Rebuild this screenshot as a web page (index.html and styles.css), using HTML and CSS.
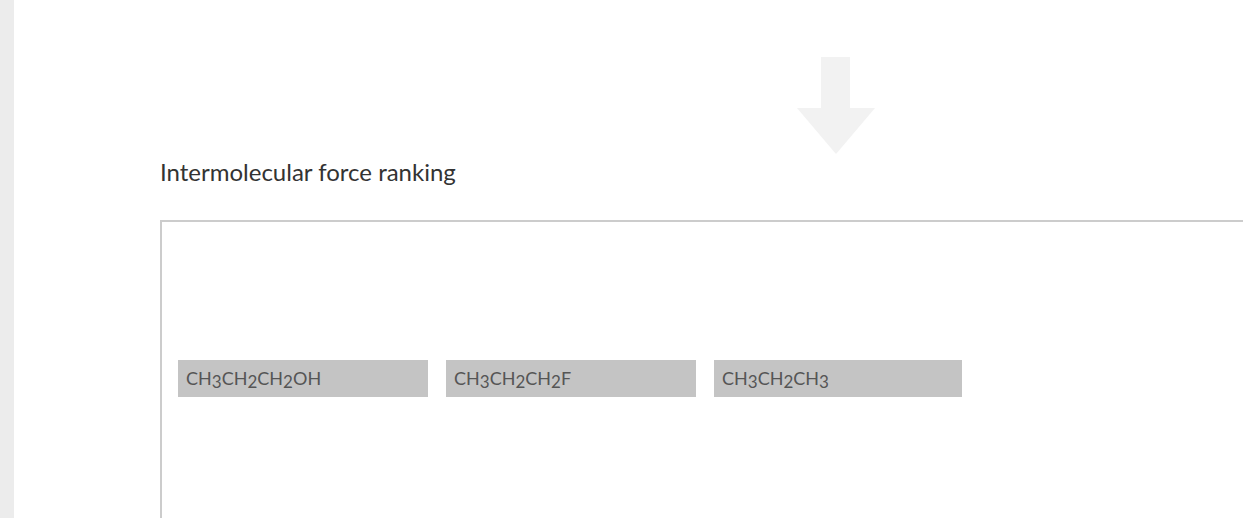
FILE: index.html
```html
<!DOCTYPE html>
<html lang="en">
<head>
<meta charset="utf-8">
<title>Intermolecular force ranking</title>
<link rel="stylesheet" href="styles.css">
</head>
<body>
<div class="page">
  <aside class="rail"></aside>
  <main class="content">
    <div class="hint">
      <svg class="hint-arrow" width="78" height="97" viewBox="0 0 78 97" aria-hidden="true">
        <path d="M24 0 H53 V51 H78 L39 97 L0 51 H24 Z" fill="#f2f2f2"/>
      </svg>
    </div>
    <h2 class="title">Intermolecular force ranking</h2>
    <section class="dropzone">
      <div class="chips">
        <div class="chip">CH<sub>3</sub>CH<sub>2</sub>CH<sub>2</sub>OH</div>
        <div class="chip">CH<sub>3</sub>CH<sub>2</sub>CH<sub>2</sub>F</div>
        <div class="chip">CH<sub>3</sub>CH<sub>2</sub>CH<sub>3</sub></div>
      </div>
    </section>
  </main>
</div>
</body>
</html>
```

FILE: styles.css
```css
html, body {
  margin: 0;
  padding: 0;
  background: #ffffff;
  overflow: hidden;
}

body {
  font-family: Lato, "Liberation Sans", sans-serif;
  height: 518px;
}

.page {
  display: flex;
  height: 518px;
}

.rail {
  flex: 0 0 14px;
  background: #ececec;
}

.content {
  flex: 1;
  padding-left: 146px;
  overflow: hidden;
}

.hint {
  height: 154px;
  padding-left: 637px;
  padding-top: 57px;
  box-sizing: border-box;
}

.hint-arrow {
  display: block;
}

.title {
  margin: 0;
  font-size: 24px;
  font-weight: 400;
  color: #333333;
  line-height: 36px;
  height: 66px;
  white-space: nowrap;
}

.dropzone {
  border-top: 2px solid #cccccc;
  border-left: 2px solid #cccccc;
  width: 1200px;
  height: 400px;
  padding: 138px 16px 0 16px;
  box-sizing: border-box;
}

.chips {
  display: flex;
  gap: 18px;
}

.chip {
  width: 250px;
  height: 37px;
  padding: 0 8px;
  box-sizing: border-box;
  background: #c4c4c4;
  color: #555555;
  font-size: 18px;
  line-height: 37px;
  white-space: nowrap;
}

.chip:last-child {
  width: 248px;
}

.chip sub {
  font-size: 17px;
  vertical-align: -3px;
  line-height: 0;
}
```
